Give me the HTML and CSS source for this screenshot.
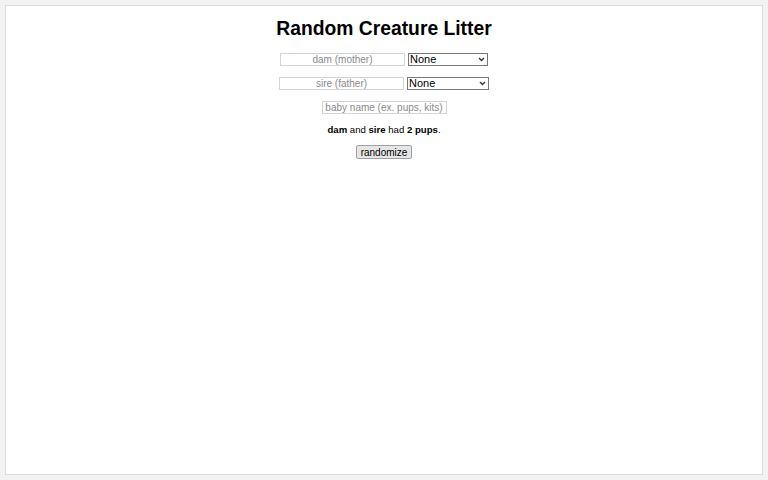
FILE: index.html
```html
<!DOCTYPE html>
<html lang="en">
<head>
    <meta charset="UTF-8">
    <title>Random Creature Litter</title>
    <link rel="stylesheet" href="styles.css">
</head>
<body>
    <div class="page">
        <h1>Random Creature Litter</h1>

        <div class="row">
            <input type="text" class="name" id="dam" placeholder="dam (mother)">
            <span class="pick">
                <select id="damType">
                    <option>None</option>
                </select>
                <svg class="chev" width="7" height="5" viewBox="0 0 7 5"><path d="M1 1l2.5 2.5L6 1" fill="none" stroke="#333" stroke-width="1.3"/></svg>
            </span>
        </div>

        <div class="row">
            <input type="text" class="name" id="sire" placeholder="sire (father)">
            <span class="pick">
                <select id="sireType" class="wide">
                    <option>None</option>
                </select>
                <svg class="chev" width="7" height="5" viewBox="0 0 7 5"><path d="M1 1l2.5 2.5L6 1" fill="none" stroke="#333" stroke-width="1.3"/></svg>
            </span>
        </div>

        <div class="row last">
            <input type="text" class="name" id="baby" placeholder="baby name (ex. pups, kits)">
        </div>

        <p class="result"><b>dam</b> and <b>sire</b> had <b>2 pups</b>.</p>

        <div class="row">
            <button id="randomize">randomize</button>
        </div>
    </div>
</body>
</html>
```

FILE: styles.css
```css
body {
    margin: 0;
    padding: 5px;
    background: #f2f2f2;
    font-family: "Liberation Sans", Arial, sans-serif;
}

.page {
    box-sizing: border-box;
    height: 470px;
    background: #ffffff;
    border: 1px solid #dcdcdc;
    text-align: center;
    padding-top: 12px;
}

h1 {
    font-size: 19.3px;
    margin: 0 0 13px 0;
    color: #000;
}

.row {
    display: flex;
    justify-content: center;
    align-items: center;
    gap: 3px;
    margin-bottom: 11px;
}
.row.last {
    margin-bottom: 10px;
}

.name {
    box-sizing: border-box;
    width: 125px;
    height: 13px;
    padding: 0;
    border: 1px solid #d4d4d4;
    font-family: inherit;
    font-size: 10px;
    text-align: center;
}
.name::placeholder {
    color: #8a8a8a;
}

.pick {
    position: relative;
    display: flex;
}
.chev {
    position: absolute;
    right: 3px;
    top: 4px;
    pointer-events: none;
}

select {
    box-sizing: border-box;
    width: 80px;
    height: 13px;
    padding: 0 0 0 1px;
    font-family: inherit;
    font-size: 11px;
    line-height: 11px;
    color: #000;
    border: 1px solid #767676;
    border-radius: 0;
    background: #fff;
    appearance: none;
}
select.wide {
    width: 82px;
}

.result {
    font-size: 9.6px;
    margin: 0 0 10px 0;
}

button {
    font-family: inherit;
    font-size: 10px;
    height: 14px;
    padding: 0 4px;
    background: #e6e6e6;
    border: 1px solid #a0a0a0;
    border-radius: 2px;
}
```
